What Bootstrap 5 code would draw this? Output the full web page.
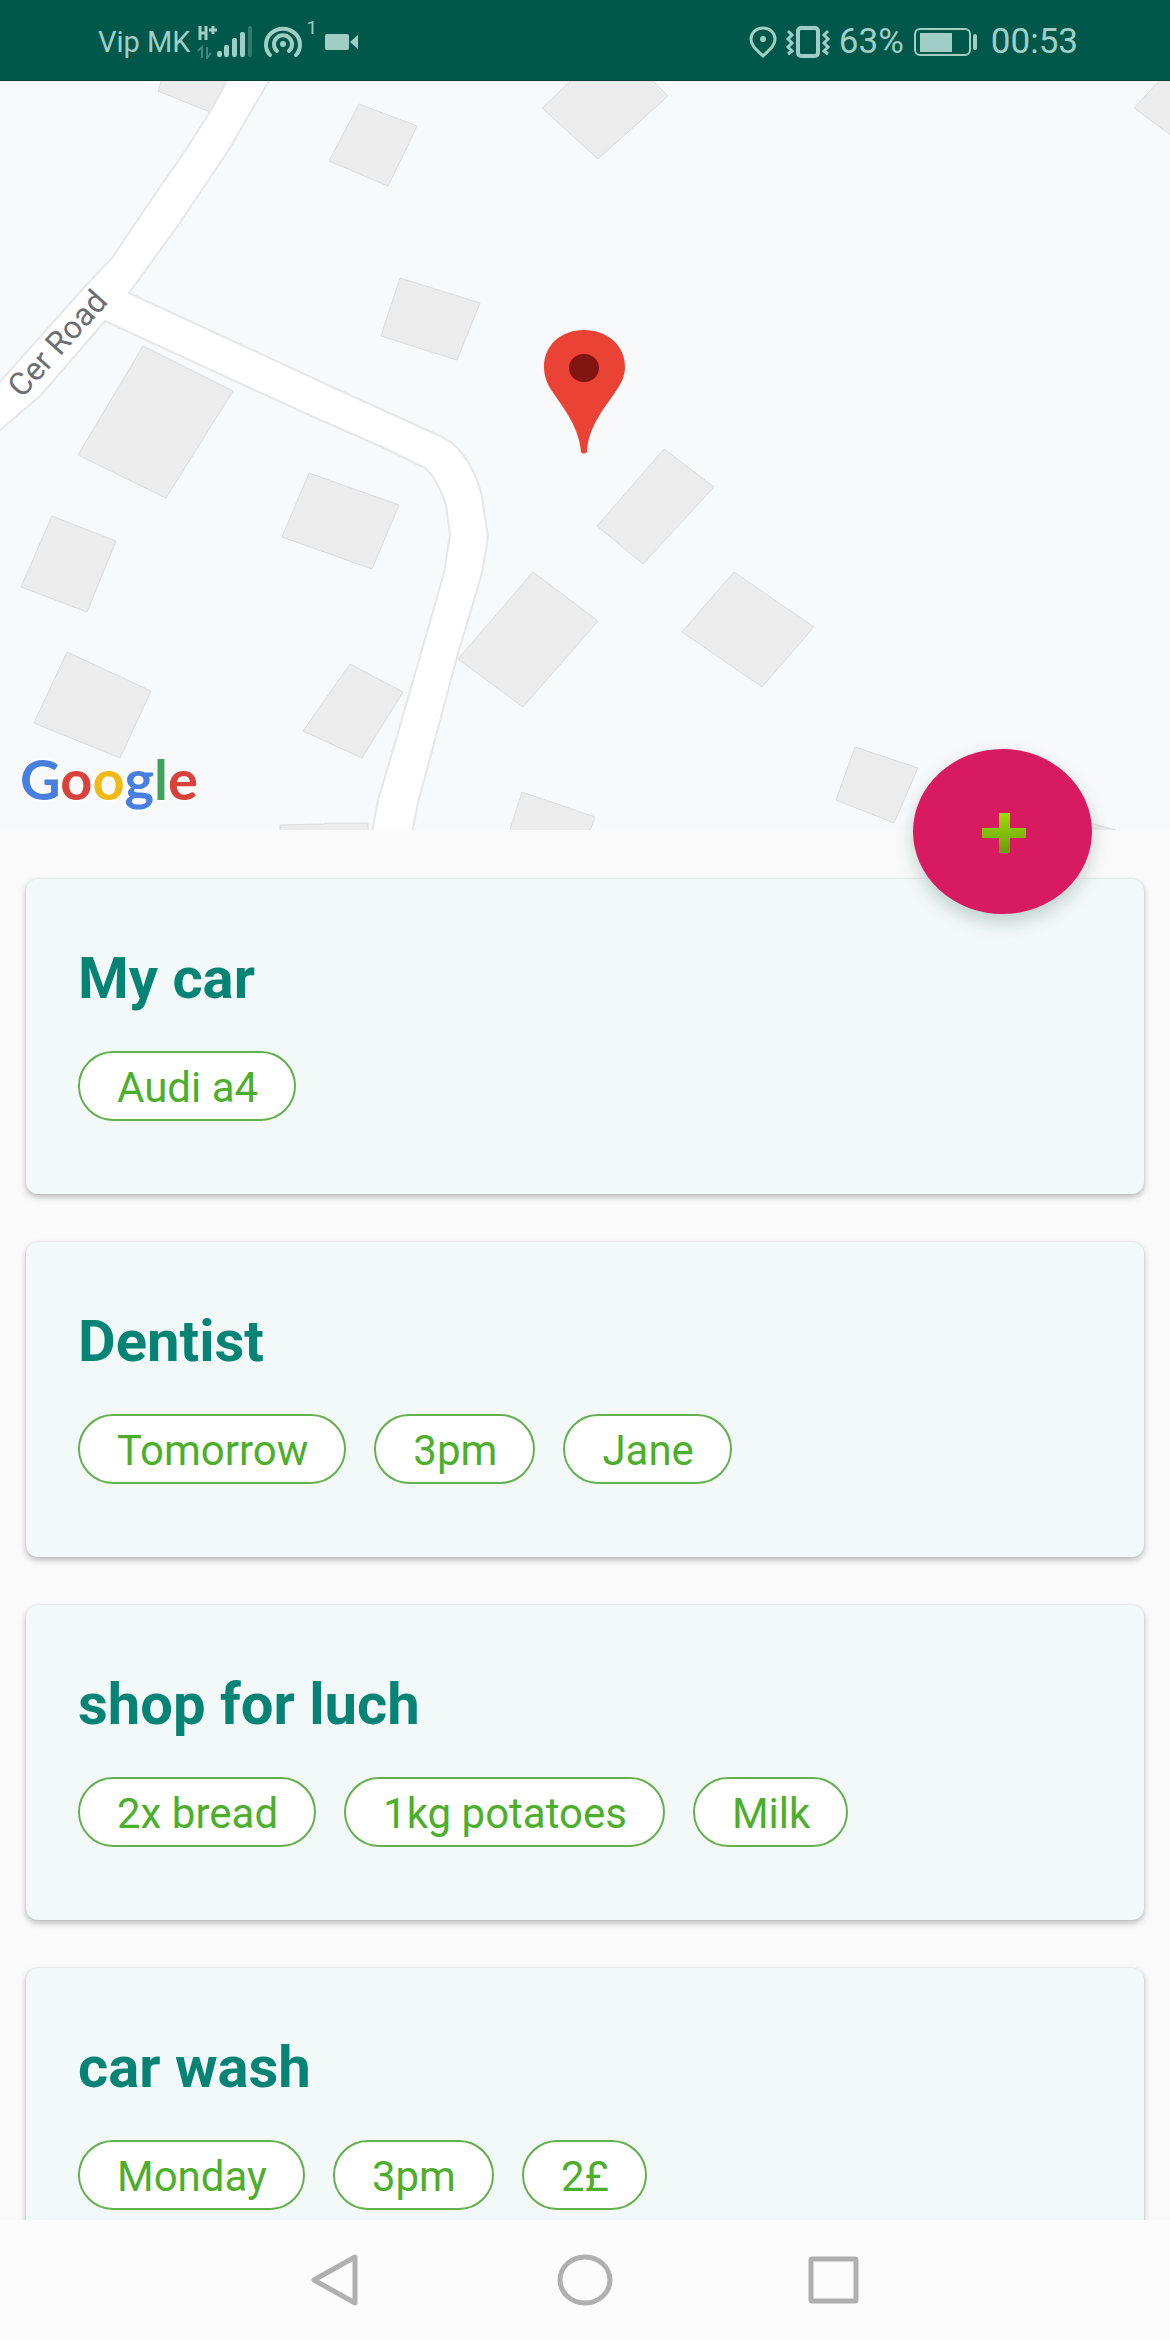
<!DOCTYPE html>
<html lang="en">
<head>
    <meta charset="utf-8">
    <meta name="viewport" content="width=device-width, initial-scale=1.0">
    <title>Reminders</title>
    <link href="https://cdn.jsdelivr.net/npm/bootstrap@5.3.0/dist/css/bootstrap.min.css" rel="stylesheet">
    <style>
        body {
            font-family: Roboto, "Liberation Sans", sans-serif;
            background: #fafafa;
        }

        /* Status bar */
        .status-bar {
            height: 81px;
            padding: 3px 92px 0 98px;
            background: #00584b;
            border-bottom: 1px solid #003d35;
            color: #a0cec6;
            font-size: 35px;
            line-height: 40px;
        }
        .status-bar svg { fill: currentColor; flex: none; }
        .carrier { font-size: 29px; margin-right: 6px; }
        .hotspot-count { font-size: 19px; line-height: 20px; margin-bottom: 28px; }

        /* Map */
        .map-area { height: 749px; background: #f8f9fb; }
        .map-canvas { width: 100%; height: 100%; }
        .street { fill: #fff; stroke: #e7e7e7; stroke-width: 2; }
        .houses { fill: #ececec; stroke: #dcdcdc; stroke-width: 1; }
        .street-name { font-size: 32px; fill: #6b6f73; stroke: #fff; stroke-width: 5; paint-order: stroke; }
        .map-logo {
            left: 20px;
            bottom: 19px;
            font-family: Lato, sans-serif;
            font-size: 56px;
            font-weight: 700;
            line-height: 64px;
            text-shadow: 0 0 5px #fff, 0 0 5px #fff;
        }
        .g-blue { color: #4780e0; }
        .g-red { color: #d9413a; }
        .g-yellow { color: #efb916; }
        .g-green { color: #3fa35b; }

        .fab {
            right: 78px;
            bottom: -84px;
            width: 179px;
            height: 165px;
            padding: 3px 0 0 3px;
            background: #d81b60;
            box-shadow: 0 8px 18px rgba(0, 60, 50, .22);
            z-index: 2;
        }

        /* Reminder list */
        .reminders { gap: 48px; padding: 49px 26px 0; min-height: 0; }
        .reminder {
            flex: none;
            height: 315px;
            padding: 67px 52px 0;
            background: #f3f9f9;
            border: 0;
            border-radius: 12px;
            box-shadow: 0 3px 6px rgba(0, 0, 0, .26), 0 0 2px rgba(0, 0, 0, .1);
        }
        .reminder h2 {
            margin: 0 0 41px;
            color: #058375;
            font-size: 58px;
            font-weight: 700;
            line-height: 64px;
        }
        .chips { gap: 28px; }
        .chip {
            height: 70px;
            padding: 4px 36px 0 37px;
            border: 2px solid #63b04c;
            background: #fff;
            color: #4caf2c;
            font-size: 42px;
            line-height: 62px;
        }

        /* System navigation */
        .system-nav { flex: none; height: 120px; gap: 189px; background: #fcfcfc; z-index: 2; }
        .system-nav svg { fill: none; stroke: #b0b0b0; stroke-width: 5; stroke-linejoin: round; }
    </style>
</head>
<body>
    <div class="d-flex flex-column vh-100 overflow-hidden">
        <header class="status-bar d-flex align-items-center justify-content-between flex-shrink-0">
            <div class="d-flex align-items-center">
                <span class="carrier">Vip MK</span>
                <svg width="58" height="34" viewBox="0 0 58 34" aria-hidden="true">
                    <path d="M3 1v14M9 1v14M3 8h6M12 5h8M16 1v8" fill="none" stroke="currentColor" stroke-width="3" />
                    <path d="M1 26l4-4v11M10 22v11l4-5" fill="none" stroke="currentColor" stroke-width="2" opacity=".4" />
                    <rect x="20" y="26" width="5" height="6" rx="2" />
                    <rect x="27" y="20" width="5" height="12" rx="2" />
                    <rect x="35" y="13" width="5" height="19" rx="2" />
                    <rect x="43" y="7" width="5" height="25" rx="2" />
                    <rect x="51" y="1" width="4" height="31" rx="2" opacity=".3" />
                </svg>
                <svg class="ms-2 me-1" width="40" height="34" viewBox="0 0 40 34" aria-hidden="true">
                    <g fill="none" stroke="currentColor" stroke-width="4" stroke-linecap="round">
                        <path d="M7 30a17 16 0 1 1 26 0" />
                        <path d="M14 26a9 9 0 1 1 12 0" />
                    </g>
                    <circle cx="20" cy="19" r="3" />
                </svg>
                <span class="hotspot-count me-2">1</span>
                <svg width="34" height="18" viewBox="0 0 34 18" aria-hidden="true">
                    <rect y="1" width="24" height="16" rx="2" />
                    <path d="M25 9l8-7v14z" />
                </svg>
            </div>
            <div class="d-flex align-items-center">
                <svg width="28" height="34" viewBox="0 0 28 34" aria-hidden="true">
                    <path d="M14 3C7 3 2 8 2 14c0 7 6 11 12 17 6-6 12-10 12-17 0-6-5-11-12-11z" fill="none" stroke="currentColor" stroke-width="3" />
                    <circle cx="14" cy="14" r="3" />
                </svg>
                <svg class="mx-2" width="46" height="34" viewBox="0 0 46 34" aria-hidden="true">
                    <g fill="none" stroke="currentColor" stroke-width="3">
                        <rect x="13" y="3" width="20" height="28" rx="3" stroke-width="4" />
                        <path d="M3 6l4 4-4 4 4 4-4 4 4 4-4 3M43 6l-4 4 4 4-4 4 4 4-4 4 4 3" />
                    </g>
                </svg>
                <span>63%</span>
                <svg class="mx-2" width="67" height="30" viewBox="0 0 67 30" aria-hidden="true">
                    <rect x="3" y="2" width="55" height="26" rx="5" fill="none" stroke="currentColor" stroke-width="2" />
                    <rect x="8" y="6" width="32" height="19" />
                    <rect x="61" y="7" width="4" height="16" rx="2" />
                </svg>
                <span class="ms-1">00:53</span>
            </div>
        </header>

        <section class="map-area position-relative flex-shrink-0">
            <svg class="map-canvas d-block" viewBox="0 0 1170 749" preserveAspectRatio="xMidYMid slice" role="img" aria-label="Map">
                <g class="houses">
                    <path d="M162-2L158 10 210 31 229-2z" />
                    <path d="M359 23L417 45 409 62 388 105 329 80z" />
                    <path d="M400 197L480 222 457 279 381 255z" />
                    <path d="M143 265L233 310 166 417 78 374z" />
                    <path d="M52 435L116 460 87 531 21 506z" />
                    <path d="M309 392L399 424 372 488 282 456z" />
                    <path d="M67 571L151 610 120 677 34 642z" />
                    <path d="M350 583L403 611 362 677 303 650z" />
                    <path d="M533 491L598 540 523 626 458 578z" />
                    <path d="M280 752V744L325 743V742H368V752z" />
                    <path d="M522 711L595 736 589 752H509z" />
                    <path d="M573-2L542 27 598 78 668 15 651-2z" />
                    <path d="M1161-2L1134 27 1172 55V-2z" />
                    <path d="M664 368L714 406 643 483 597 445z" />
                    <path d="M734 491L814 546 762 606 682 551z" />
                    <path d="M855 666L918 687 894 742 836 719z" />
                    <path d="M1060 734L1116 749V752H1060z" />
                </g>
                <path class="street" d="M228-2L210 31 181 76 149 122 112 177 88 202-2 303V351L41 314 105 240 226 296 316 337 384 367 425 387Q437 397 446 424L450 454 444 492 395 662 378 719 372 752H412L418 722 457 576 482 492 488 456 482 416Q474 381 451 361L440 355 339 309 181 236 129 212 177 146 228 70 270-2z" />
                <text class="street-name" transform="translate(22 318) rotate(-48)">Cer Road</text>
                <path d="M584 249c-23 0-40 15-40 37 0 10 4 18 8 24 12 18 27 36 29 61q3 3 6 0c1-25 17-43 29-61 4-6 9-14 9-24 0-22-18-37-41-37z" fill="#ea4335" />
                <ellipse cx="584" cy="287" rx="15" ry="14" fill="#811411" />
            </svg>
            <div class="map-logo position-absolute" aria-label="Google"><span class="g-blue">G</span><span class="g-red">o</span><span class="g-yellow">o</span><span class="g-blue">g</span><span class="g-green">l</span><span class="g-red">e</span></div>
            <button type="button" class="fab btn position-absolute rounded-circle border-0 d-flex align-items-center justify-content-center" aria-label="Add reminder">
                <svg width="44" height="40" viewBox="0 0 44 40">
                    <defs>
                        <linearGradient id="plusFill" x1="0" y1="0" x2="0" y2="1">
                            <stop offset="0" stop-color="#9be000" />
                            <stop offset="1" stop-color="#6a9c0c" />
                        </linearGradient>
                    </defs>
                    <path d="M17 0h11v15h16v10H28v15H17V25H0V15h17z" fill="url(#plusFill)" />
                </svg>
            </button>
        </section>

        <main class="reminders d-flex flex-column flex-grow-1 overflow-hidden">
            <article class="reminder card">
                <h2>My car</h2>
                <div class="chips d-flex">
                    <span class="chip rounded-pill">Audi a4</span>
                </div>
            </article>
            <article class="reminder card">
                <h2>Dentist</h2>
                <div class="chips d-flex">
                    <span class="chip rounded-pill">Tomorrow</span>
                    <span class="chip rounded-pill">3pm</span>
                    <span class="chip rounded-pill">Jane</span>
                </div>
            </article>
            <article class="reminder card">
                <h2>shop for luch</h2>
                <div class="chips d-flex">
                    <span class="chip rounded-pill">2x bread</span>
                    <span class="chip rounded-pill">1kg potatoes</span>
                    <span class="chip rounded-pill">Milk</span>
                </div>
            </article>
            <article class="reminder card">
                <h2>car wash</h2>
                <div class="chips d-flex">
                    <span class="chip rounded-pill">Monday</span>
                    <span class="chip rounded-pill">3pm</span>
                    <span class="chip rounded-pill">2£</span>
                </div>
            </article>
        </main>

        <nav class="system-nav d-flex align-items-center justify-content-center">
            <button type="button" class="btn border-0 p-0" aria-label="Back">
                <svg class="d-block" width="60" height="56" viewBox="0 0 60 56"><path d="M8 28L49 5V51z" /></svg>
            </button>
            <button type="button" class="btn border-0 p-0" aria-label="Home">
                <svg class="d-block" width="60" height="56" viewBox="0 0 60 56"><ellipse cx="30" cy="28" rx="25" ry="23" /></svg>
            </button>
            <button type="button" class="btn border-0 p-0" aria-label="Recent apps">
                <svg class="d-block" width="60" height="56" viewBox="0 0 60 56"><rect x="7" y="7" width="45" height="42" rx="1" /></svg>
            </button>
        </nav>
    </div>

    <script src="https://cdn.jsdelivr.net/npm/bootstrap@5.3.0/dist/js/bootstrap.bundle.min.js"></script>
</body>
</html>
